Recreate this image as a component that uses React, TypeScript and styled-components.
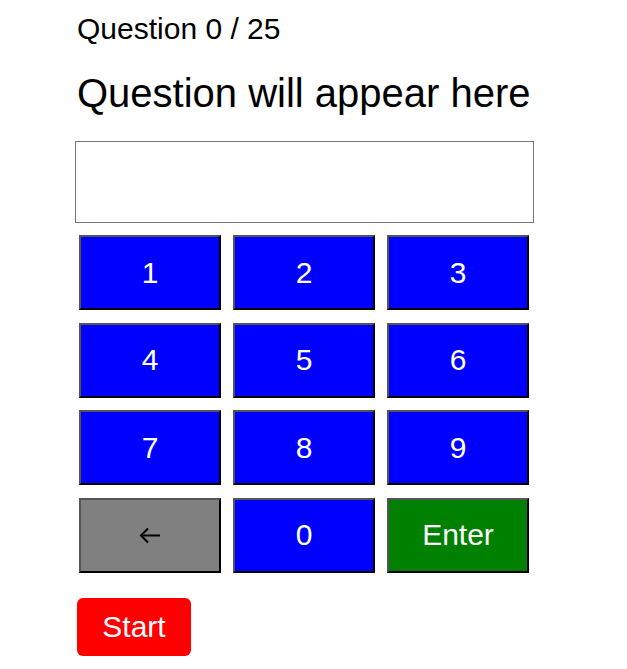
import React from "react";
import styled, { createGlobalStyle } from "styled-components";

const GlobalStyle = createGlobalStyle`
  html, body {
    margin: 0;
    padding: 0;
    background: #ffffff;
  }
  body {
    font-family: "Liberation Sans", Arial, sans-serif;
    color: #000000;
  }
`;

const Page = styled.main`
  display: flex;
  flex-direction: column;
  align-items: flex-start;
  padding: 11px 0 0 75px;
  width: 459px;
`;

const Counter = styled.div`
  font-size: 30px;
  line-height: 35px;
  margin-left: 2px;
`;

const Title = styled.h1`
  font-size: 40px;
  font-weight: 400;
  line-height: 46px;
  margin: 24px 0 0 2px;
`;

const AnswerInput = styled.input`
  box-sizing: border-box;
  width: 459px;
  height: 82px;
  margin-top: 25px;
  border: 1px solid #767676;
  background: #ffffff;
  font-family: inherit;
  font-size: 30px;
  padding: 0 8px;
  outline: none;
`;

const Keypad = styled.div`
  display: grid;
  grid-template-columns: repeat(3, 142px);
  grid-auto-rows: 75px;
  column-gap: 12px;
  row-gap: 12.5px;
  margin: 12px 0 0 4px;
`;

type Tone = "blue" | "gray" | "green";

const toneColor: Record<Tone, string> = {
  blue: "#0000ff",
  gray: "#808080",
  green: "#008000",
};

const Key = styled.button<{ $tone: Tone }>`
  box-sizing: border-box;
  display: flex;
  align-items: center;
  justify-content: center;
  padding: 0;
  border-style: solid;
  border-width: 2px;
  border-color: #555555 #000000 #000000 #555555;
  background: ${(p) => toneColor[p.$tone]};
  color: ${(p) => (p.$tone === "gray" ? "#000000" : "#ffffff")};
  font-family: "Liberation Sans", Arial, sans-serif;
  font-size: 30px;
  line-height: 1;
  cursor: pointer;
`;

const StartButton = styled.button`
  box-sizing: border-box;
  width: 114px;
  height: 58px;
  margin: 25px 0 0 2px;
  border: none;
  border-radius: 6px;
  background: #ff0000;
  color: #ffffff;
  font-family: "Liberation Sans", Arial, sans-serif;
  font-size: 30px;
  line-height: 1;
  cursor: pointer;
`;

const BackArrow = () => (
  <svg width="22" height="17" viewBox="0 0 22 17" fill="none" aria-label="backspace">
    <path d="M21 8.5H2" stroke="#000" strokeWidth="2" />
    <path d="M9 1.5L2 8.5L9 15.5" stroke="#000" strokeWidth="2" />
  </svg>
);

export default function App() {
  const digits = ["1", "2", "3", "4", "5", "6", "7", "8", "9"];
  return (
    <>
      <GlobalStyle />
      <Page>
        <Counter>Question 0 / 25</Counter>
        <Title>Question will appear here</Title>
        <AnswerInput type="text" />
        <Keypad>
          {digits.map((d) => (
            <Key key={d} $tone="blue">
              {d}
            </Key>
          ))}
          <Key $tone="gray">
            <BackArrow />
          </Key>
          <Key $tone="blue">0</Key>
          <Key $tone="green">Enter</Key>
        </Keypad>
        <StartButton>Start</StartButton>
      </Page>
    </>
  );
}
